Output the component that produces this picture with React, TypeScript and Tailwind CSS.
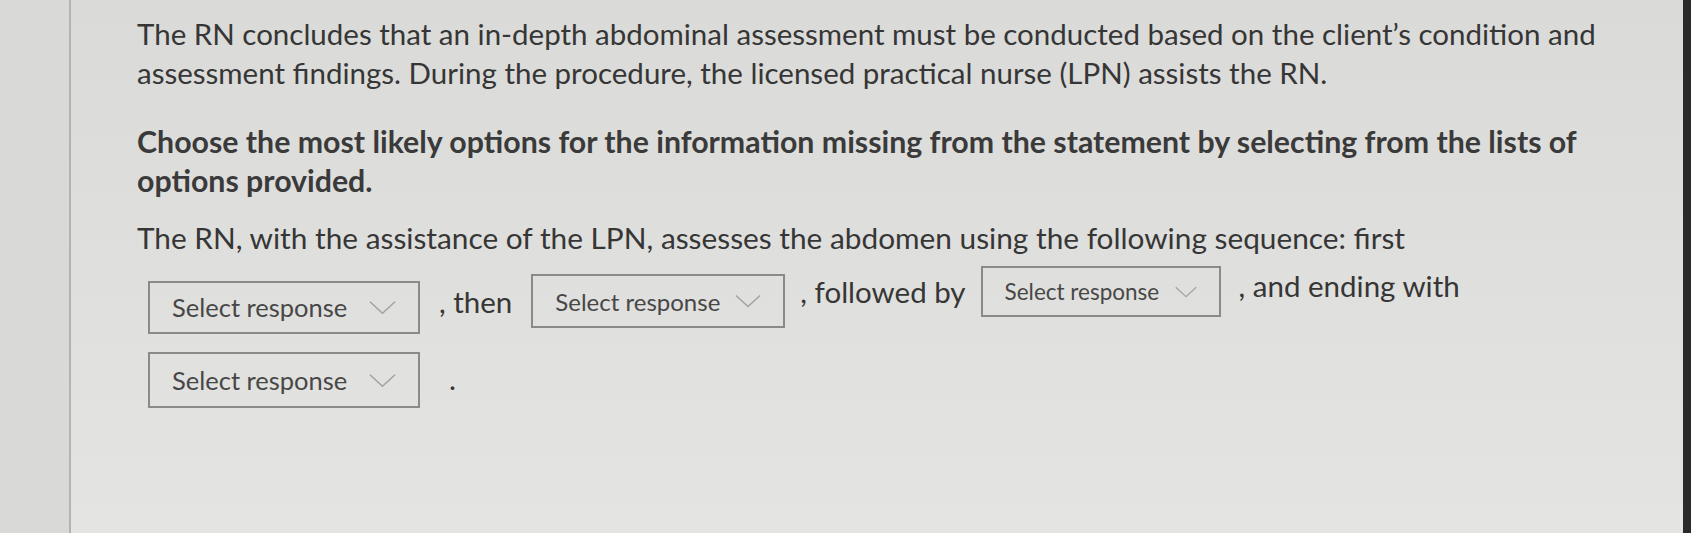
type SelectProps = {
    box: string;
    text: string;
    chevron: string;
};

function SelectBox({ box, text, chevron }: SelectProps) {
    return (
        <div
            className={`${box} shrink-0 flex items-center justify-between pl-[22px] pr-[22px] border-2 border-[#8a8a88] ${text}`}
        >
            <span className="text-[#474747]">Select response</span>
            <svg className={chevron} viewBox="0 0 28 15" fill="none">
                <polyline points="1,1.5 14,13.5 27,1.5" stroke="#a3a3a1" strokeWidth="1.6" />
            </svg>
        </div>
    );
}

export default function App() {
    return (
        <div
            className="w-[1691px] h-[533px] flex bg-[#dcdcda] text-[#363636] overflow-hidden"
            style={{ fontFamily: "Lato, 'Noto Sans', sans-serif" }}
        >
            <div className="w-[71px] shrink-0 border-r-2 border-[#b3b3b1] bg-[#d9d9d7]" />
            <main className="flex-1 pl-[66px] pt-[14px] text-[29.5px] leading-[39px] bg-gradient-to-b from-[#dadad8] to-[#e4e4e2]">
                <p>
                    The RN concludes that an in-depth abdominal assessment must be conducted based on the client’s condition and
                    <br />
                    assessment findings. During the procedure, the licensed practical nurse (LPN) assists the RN.
                </p>
                <p className="mt-[30px] font-bold text-[30.3px] text-[#3a3a3a]">
                    Choose the most likely options for the information missing from the statement by selecting from the lists of
                    <br />
                    options provided.
                </p>
                <p className="mt-[18px] text-[29.8px]">The RN, with the assistance of the LPN, assesses the abdomen using the following sequence: first</p>
                <div className="mt-[9px] ml-[11px] flex items-start">
                    <div className="mt-[15px]">
                        <SelectBox box="w-[272px] h-[53px]" text="text-[25.5px]" chevron="w-[27px] h-[15px]" />
                    </div>
                    <span className="mt-[16px] ml-[19px] mr-[19px]">, then</span>
                    <div className="mt-[8px]">
                        <SelectBox box="w-[254px] h-[54px]" text="text-[24px]" chevron="w-[26px] h-[14px]" />
                    </div>
                    <span className="mt-[6px] ml-[15px] mr-[15px]">, followed by</span>
                    <SelectBox box="w-[240px] h-[51px]" text="text-[22.5px]" chevron="w-[22px] h-[12px]" />
                    <span className="ml-[18px]">, and ending with</span>
                </div>
                <div className="mt-[18px] ml-[11px] flex items-start">
                    <SelectBox box="w-[272px] h-[56px]" text="text-[25.5px]" chevron="w-[27px] h-[15px]" />
                    <span className="mt-[7px] ml-[29px]">.</span>
                </div>
            </main>
            <div className="w-[8px] shrink-0 bg-[#2a2a2a]" />
        </div>
    );
}
